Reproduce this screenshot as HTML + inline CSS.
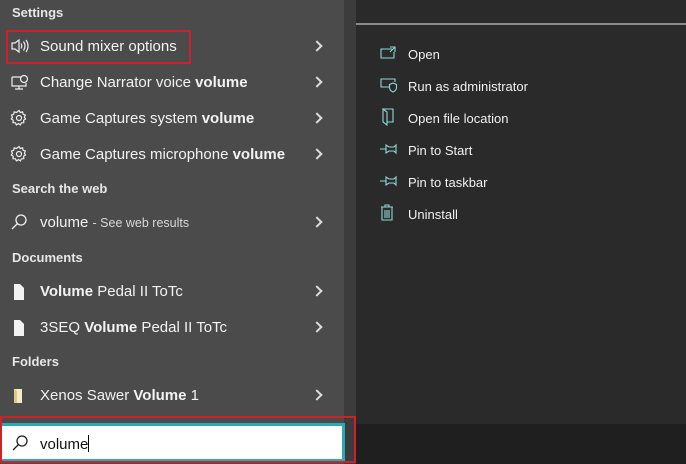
<!DOCTYPE html>
<html><head><style>
*{margin:0;padding:0;box-sizing:border-box}
body{width:686px;height:464px;overflow:hidden;background:#2a2a2a;font-family:"Liberation Sans",sans-serif;position:relative}
#left{position:absolute;left:0;top:0;width:344px;height:464px;background:#4b4b4b}
#strip{position:absolute;left:344px;top:0;width:12px;height:464px;background:#3c3c3c}
#task{position:absolute;left:356px;top:424px;width:330px;height:40px;background:#1f1f1f}
.h{position:absolute;left:12px;font-size:13px;font-weight:bold;color:#e6e6e6}
.r{position:absolute;left:40px;font-size:15px;color:#f2f2f2;white-space:nowrap}
.r b{font-weight:bold}
.s{font-size:12.5px;color:#d8d8d8}
.ch{position:absolute;left:313px;width:8px;height:8px;border-right:2px solid #ddd;border-top:2px solid #ddd;transform:rotate(45deg)}
.ic{position:absolute;left:10px}
.m{position:absolute;left:408px;font-size:13px;color:#f0f0f0}
.mi{position:absolute;left:380px}
</style></head><body>
<div id="left"></div><div id="strip"></div>
<div style="position:absolute;left:356px;top:23px;width:330px;height:2px;background:#8a8a8a"></div>
<div id="task"></div>

<div class="h" style="top:5px">Settings</div>
<div style="position:absolute;left:6px;top:30px;width:185px;height:34px;border:2px solid #d0202a"></div>
<svg class="ic" style="top:38px" width="20" height="16" viewBox="0 0 20 16" fill="none" stroke="#eee" stroke-width="1.2"><path d="M2 5h3l4-3v12l-4-3H2z"/><path d="M11 5.5q1.5 2.5 0 5M13.5 3.5q3 4.5 0 9M16 2q4 6 0 12"/></svg>
<div class="r" style="top:38px">Sound mixer options</div><div class="ch" style="top:42px"></div>
<svg class="ic" style="top:74px" width="20" height="16" viewBox="0 0 20 16" fill="none" stroke="#eee" stroke-width="1.2"><path d="M2 3h9M2 3v9h14V9M9 12v3M5 15h8"/><circle cx="14" cy="5" r="3.5"/></svg>
<div class="r" style="top:74px">Change Narrator voice <b>volume</b></div><div class="ch" style="top:78px"></div>
<svg class="ic" style="top:109px" width="18" height="18" viewBox="0 0 18 18" fill="none" stroke="#eee" stroke-width="1.2"><circle cx="9" cy="9" r="2.5"/><path d="M9 1.5l1.3 2 2.3-.6.5 2.3 2.2.9-.9 2.2 1.1 1.7-1.9 1.3.2 2.4-2.4.1-1 2.1-2-1.3-2 1.3-1-2.1-2.4-.1.2-2.4-1.9-1.3 1.1-1.7-.9-2.2 2.2-.9.5-2.3 2.3.6z"/></svg>
<div class="r" style="top:110px">Game Captures system <b>volume</b></div><div class="ch" style="top:114px"></div>
<svg class="ic" style="top:145px" width="18" height="18" viewBox="0 0 18 18" fill="none" stroke="#eee" stroke-width="1.2"><circle cx="9" cy="9" r="2.5"/><path d="M9 1.5l1.3 2 2.3-.6.5 2.3 2.2.9-.9 2.2 1.1 1.7-1.9 1.3.2 2.4-2.4.1-1 2.1-2-1.3-2 1.3-1-2.1-2.4-.1.2-2.4-1.9-1.3 1.1-1.7-.9-2.2 2.2-.9.5-2.3 2.3.6z"/></svg>
<div class="r" style="top:146px">Game Captures microphone <b>volume</b></div><div class="ch" style="top:150px"></div>

<div class="h" style="top:181px">Search the web</div>
<svg class="ic" style="top:213px" width="18" height="18" viewBox="0 0 18 18" fill="none" stroke="#eee" stroke-width="1.3"><circle cx="11" cy="7" r="5"/><path d="M7.5 10.5L2 16"/></svg>
<div class="r" style="top:214px">volume <span class="s">- See web results</span></div><div class="ch" style="top:218px"></div>

<div class="h" style="top:250px">Documents</div>
<svg class="ic" style="top:283px" width="16" height="18" viewBox="0 0 16 18"><path d="M4 1h6l4 4v12H4z" fill="#f2f2f2"/></svg>
<div class="r" style="top:283px"><b>Volume</b> Pedal II ToTc</div><div class="ch" style="top:287px"></div>
<svg class="ic" style="top:319px" width="16" height="18" viewBox="0 0 16 18"><path d="M4 1h6l4 4v12H4z" fill="#f2f2f2"/></svg>
<div class="r" style="top:319px">3SEQ <b>Volume</b> Pedal II ToTc</div><div class="ch" style="top:323px"></div>

<div class="h" style="top:354px">Folders</div>
<svg class="ic" style="top:387px" width="16" height="18" viewBox="0 0 16 18"><path d="M4 2h8v14H4z" fill="#f3ecc4"/><path d="M4 2l3 2v12H4z" fill="#d9c98a"/></svg>
<div class="r" style="top:387px">Xenos Sawer <b>Volume</b> 1</div><div class="ch" style="top:391px"></div>

<div style="position:absolute;left:0;top:416px;width:356px;height:47px;border:2px solid #d0202a"></div>
<div style="position:absolute;left:2px;top:423px;width:343px;height:38px;background:#2ba9b4"></div>
<div style="position:absolute;left:2px;top:426px;width:340px;height:33px;background:#fff"></div>
<svg style="position:absolute;left:11px;top:434px" width="18" height="18" viewBox="0 0 18 18" fill="none" stroke="#222" stroke-width="1.3"><circle cx="11" cy="7" r="5"/><path d="M7.5 10.5L2 16"/></svg>
<div style="position:absolute;left:40px;top:435px;font-size:15px;color:#111">volume<span style="display:inline-block;width:1px;height:17px;background:#000;vertical-align:-3px"></span></div>

<svg class="mi" style="top:45px" width="18" height="16" viewBox="0 0 18 16" fill="none" stroke="#8fd8d6" stroke-width="1.1"><path d="M12 4H1v9h13V7M10 2h5v5M15 2l-5 5"/></svg>
<div class="m" style="top:47px">Open</div>
<svg class="mi" style="top:77px" width="18" height="16" viewBox="0 0 18 16" fill="none" stroke="#8fd8d6" stroke-width="1.1"><path d="M9 10H1V2h14v3"/><path d="M13 6l3.5 1.5v3q0 3-3.5 4.5q-3.5-1.5-3.5-4.5v-3z"/></svg>
<div class="m" style="top:79px">Run as administrator</div>
<svg class="mi" style="top:108px" width="18" height="18" viewBox="0 0 18 18" fill="none" stroke="#8fd8d6" stroke-width="1.1"><path d="M3 1h10v13H7M3 1l4 3v13l-4-3z"/></svg>
<div class="m" style="top:111px">Open file location</div>
<svg class="mi" style="top:142px" width="18" height="14" viewBox="0 0 18 14" fill="none" stroke="#8fd8d6" stroke-width="1.1"><path d="M0 7h6M6 3v8l3-2h5l2 2V3l-2 2H9z"/></svg>
<div class="m" style="top:143px">Pin to Start</div>
<svg class="mi" style="top:174px" width="18" height="14" viewBox="0 0 18 14" fill="none" stroke="#8fd8d6" stroke-width="1.1"><path d="M0 7h6M6 3v8l3-2h5l2 2V3l-2 2H9z"/></svg>
<div class="m" style="top:175px">Pin to taskbar</div>
<svg class="mi" style="top:204px" width="16" height="18" viewBox="0 0 16 18" fill="none" stroke="#8fd8d6" stroke-width="1.1"><path d="M1 3h12M5 3V1h4v2M2 3v13h10V3M5 6v8M7 6v8M9 6v8"/></svg>
<div class="m" style="top:207px">Uninstall</div>
</body></html>
